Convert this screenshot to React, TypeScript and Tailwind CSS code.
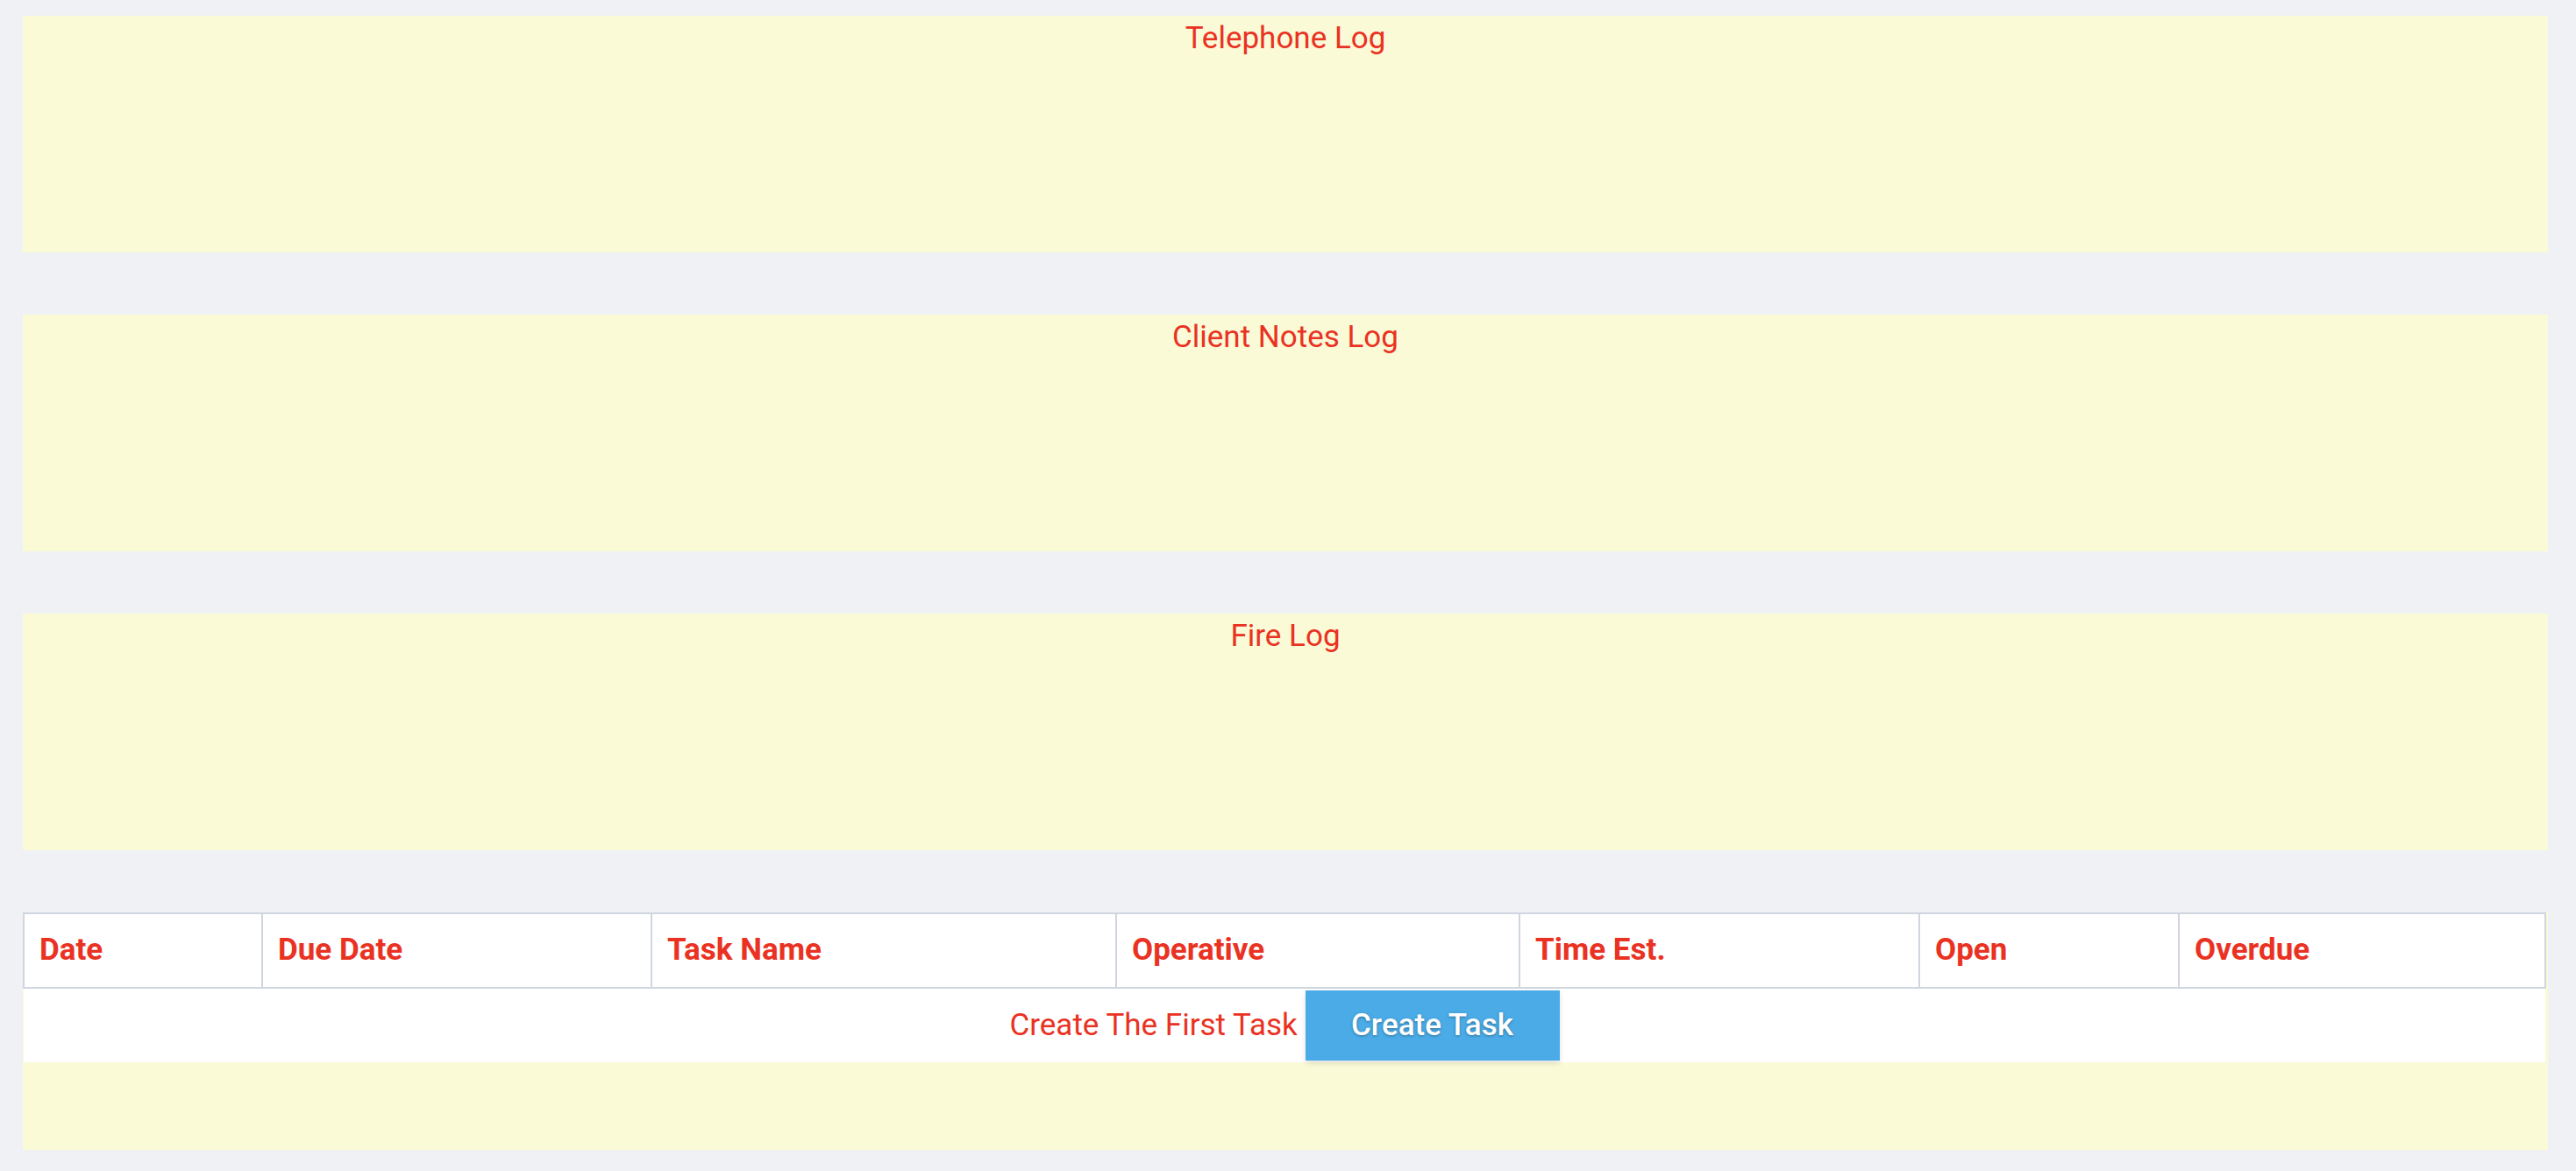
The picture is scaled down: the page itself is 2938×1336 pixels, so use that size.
import React from "react";

const columns: { label: string; w: string }[] = [
  { label: "Date", w: "w-[272px]" },
  { label: "Due Date", w: "w-[444px]" },
  { label: "Task Name", w: "w-[530px]" },
  { label: "Operative", w: "w-[460px]" },
  { label: "Time Est.", w: "w-[456px]" },
  { label: "Open", w: "w-[296px]" },
  { label: "Overdue", w: "" },
];

function LogPanel({ title }: { title: string }) {
  return (
    <div className="h-[270px] bg-[#fafad7] text-center text-[#ea3223] leading-[1.5] mb-[71px]">
      {title}
    </div>
  );
}

export default function App() {
  return (
    <div className="min-h-screen bg-[#f0f1f5] pt-[18px] pl-[26px] pr-[32px] pb-[24px] font-['Roboto',sans-serif] text-[35px] leading-[1.5]">
      <LogPanel title="Telephone Log" />
      <LogPanel title="Client Notes Log" />
      <LogPanel title="Fire Log" />
      <div className="bg-[#fafad7]">
        <table className="w-[calc(100%-2px)] border-collapse table-fixed">
          <thead>
            <tr className="bg-white">
              {columns.map((c) => (
                <th
                  key={c.label}
                  className={`${c.w} h-[85px] border-2 border-[#cfd6df] px-[17px] text-left font-bold text-[#ea3223]`}
                >
                  {c.label}
                </th>
              ))}
            </tr>
          </thead>
          <tbody>
            <tr className="bg-white">
              <td colSpan={7} className="py-[2px] text-center text-[#ea3223]">
                <span>Create The First Task</span>{" "}
                <button
                  type="button"
                  className="inline-block h-[80px] w-[290px] align-baseline bg-[#4aabe6] text-white font-medium leading-[80px] shadow-[0_3px_6px_rgba(0,0,0,0.12)] [text-shadow:0_1px_3px_rgba(0,0,0,0.35)]"
                >
                  Create Task
                </button>
              </td>
            </tr>
          </tbody>
        </table>
        <div className="h-[100px]" />
      </div>
    </div>
  );
}
